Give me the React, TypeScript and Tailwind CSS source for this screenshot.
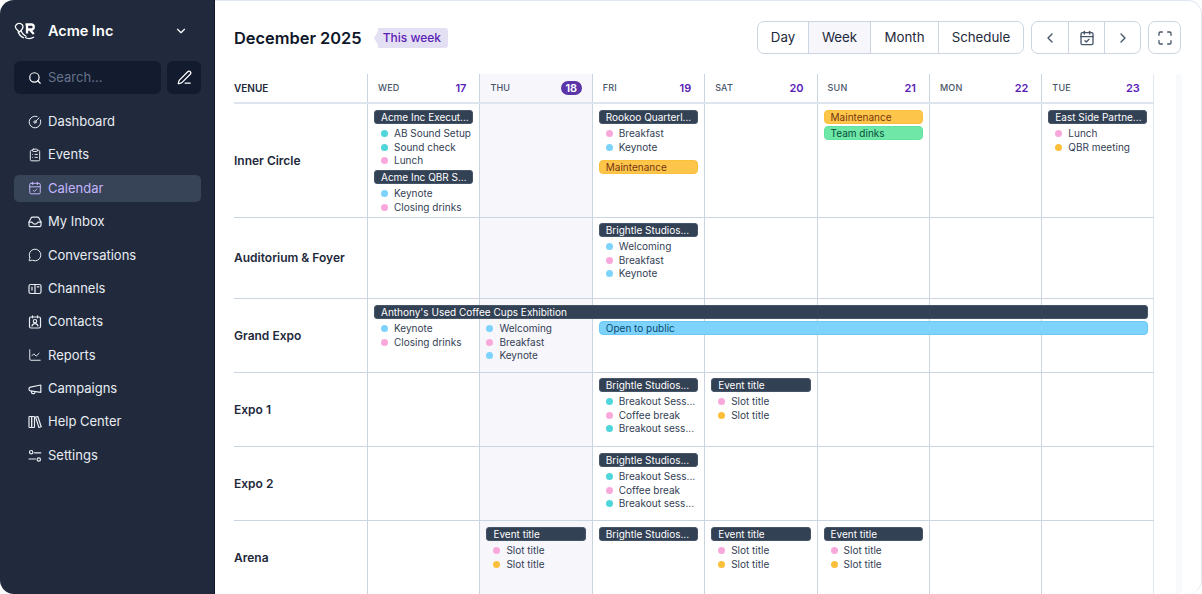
import { CalendarCheck, ChartLine, ChevronDown, ChevronLeft, ChevronRight, CircleGauge, ClipboardList, Maximize, MessageCircle, PenLine, Search } from 'lucide-react';
import type { ReactNode } from 'react';

type Slot = { label: string; color: string };

const teal = 'bg-[#4fd6da]';
const pink = 'bg-[#f9a8dc]';
const blue = 'bg-[#7dd3fc]';
const amber = 'bg-[#fbbf3c]';

const days = [
  { name: 'WED', num: '17' },
  { name: 'THU', num: '18', today: true },
  { name: 'FRI', num: '19' },
  { name: 'SAT', num: '20' },
  { name: 'SUN', num: '21' },
  { name: 'MON', num: '22' },
  { name: 'TUE', num: '23' },
];

const Logo = () => (
  <svg width="22" height="18" viewBox="0 0 22 18" fill="none" stroke="#fff" strokeWidth="1.3">
    <path d="M1.500 4C2.500 1 6.500 .5 8.500 3C9.500 5 8 8 5.500 10C3 8 .8 6 1.500 4Z" />
    <path d="M4 9.500c1 3 3.500 5.500 6 6.500M7 8.500c1 2.500 3 5 5.500 6" />
    <path d="M11.500 2.500h6c3 0 3 5 0 5h-4.500M13 2.500v9M16 8l3.800 4" strokeWidth="2.300" />
    <path d="M11 15.500c3 1.500 6 1.500 9-.5" />
  </svg>
);

const InboxIcon = () => (
  <svg width="14" height="14" viewBox="0 0 14 14" fill="none" stroke="currentColor" strokeWidth="1.200" strokeLinejoin="round" strokeLinecap="round">
    <path d="M1 7l2.200-4.200c.2-.4.500-.6 1-.6h5.600c.5 0 .8.200 1 .6L13 7v3.300c0 .8-.6 1.400-1.400 1.400H2.400c-.8 0-1.400-.6-1.400-1.400V7Z" />
    <path d="M1 7.200h2.500c.5 0 .8.200 1 .6.400.9 1.300 1.300 2.500 1.300s2.100-.4 2.500-1.300c.2-.4.500-.6 1-.6H13" />
  </svg>
);

const ChannelsIcon = () => (
  <svg width="14" height="14" viewBox="0 0 14 14" fill="none" stroke="currentColor" strokeWidth="1.200" strokeLinejoin="round" strokeLinecap="round">
    <rect x="1" y="2.500" width="12" height="9" rx="1.800" />
    <path d="M7 2.500v9M4 5v3M9.300 4.800h1.600" />
  </svg>
);

const ContactsIcon = () => (
  <svg width="14" height="14" viewBox="0 0 14 14" fill="none" stroke="currentColor" strokeWidth="1.200" strokeLinejoin="round" strokeLinecap="round">
    <rect x="1.500" y="2" width="11" height="11" rx="1.500" />
    <path d="M4.500 .8v2M9.500 .8v2" />
    <circle cx="7" cy="6.200" r="1.700" />
    <path d="M4 11c.4-1.500 1.500-2.300 3-2.300s2.600.8 3 2.300" />
  </svg>
);

const MegaphoneIcon = () => (
  <svg width="14" height="14" viewBox="0 0 14 14" fill="none" stroke="currentColor" strokeWidth="1.200" strokeLinejoin="round" strokeLinecap="round">
    <path d="M12.800 3v7.300L2.400 8.800C1.300 8.600 1 8 1 7.200V6.700c0-.8.400-1.300 1.400-1.600L12.800 3Z" />
    <path d="M3.500 9v1.300c0 .8.500 1.300 1.300 1.300h.9c.7 0 1.200-.5 1.200-1.200" />
  </svg>
);

const LibraryIcon = () => (
  <svg width="14" height="14" viewBox="0 0 14 14" fill="none" stroke="currentColor" strokeWidth="1.200" strokeLinejoin="round">
    <rect x="1" y="1.500" width="2.600" height="11" rx=".5" />
    <rect x="3.600" y="1.500" width="2.900" height="11" rx=".5" />
    <path d="M7.600 2.100l2.200-.6 3.400 10.300-2.300.7L7.600 2.100Z" />
  </svg>
);

const SettingsIcon = () => (
  <svg width="14" height="14" viewBox="0 0 14 14" fill="none" stroke="currentColor" strokeWidth="1.200" strokeLinecap="round">
    <circle cx="3.200" cy="3.200" r="1.700" />
    <circle cx="10.800" cy="10.500" r="1.700" />
    <path d="M6.500 3.800h6.300M1 10h6.500" />
  </svg>
);

const nav: { label: string; icon: ReactNode; active?: boolean }[] = [
  { label: 'Dashboard', icon: <CircleGauge size={14} strokeWidth={1.7} /> },
  { label: 'Events', icon: <ClipboardList size={14} strokeWidth={1.7} /> },
  { label: 'Calendar', icon: <CalendarCheck size={14} strokeWidth={1.7} />, active: true },
  { label: 'My Inbox', icon: <InboxIcon /> },
  { label: 'Conversations', icon: <MessageCircle size={14} strokeWidth={1.7} /> },
  { label: 'Channels', icon: <ChannelsIcon /> },
  { label: 'Contacts', icon: <ContactsIcon /> },
  { label: 'Reports', icon: <ChartLine size={14} strokeWidth={1.7} /> },
  { label: 'Campaigns', icon: <MegaphoneIcon /> },
  { label: 'Help Center', icon: <LibraryIcon /> },
  { label: 'Settings', icon: <SettingsIcon /> },
];

const Pill = ({ title }: { title: string }) => (
  <div className="h-[14px] rounded-[3px] border border-[#475569] bg-[#334155] pl-[6px] text-[10px] leading-[12px] whitespace-nowrap text-white">
    {title}
  </div>
);

const Bar = ({ title, className }: { title: string; className: string }) => (
  <div className={`h-[14px] rounded-[4px] border pl-[6px] text-[10px] leading-[12px] ${className}`}>{title}</div>
);

const maintenance = 'border-[#fbbf3c] bg-[#fdc64b] text-[#78350f]';
const dinks = 'border-[#5fe3a1] bg-[#6ee7a7] text-[#064e3b]';
const publicBar = 'border-[#6cc8f5] bg-[#7dd3fc] text-[#0c4a6e]';

const Slots = ({ items }: { items: Slot[] }) => (
  <ul className="mt-[3px] pl-[7px]">
    {items.map((s, i) => (
      <li key={i} className="flex h-[13.4px] items-center gap-[6px] text-[10px] leading-[13px] whitespace-nowrap text-[#334155]">
        <span className={`h-[7px] w-[7px] shrink-0 rounded-full ${s.color}`} />
        <span>{s.label}</span>
      </li>
    ))}
  </ul>
);

const Cell = ({ shaded, last, tight, children }: { shaded?: boolean; last?: boolean; tight?: boolean; children?: ReactNode }) => (
  <div className={`border-l border-[#cbd5e1] px-[6px] ${tight ? 'pt-[5px]' : 'pt-[6px]'} ${shaded ? 'bg-[#f7f6fb]' : ''} ${last ? 'border-r border-r-[#e2e8f0]' : ''}`}>
    {children}
  </div>
);

const Row = ({ name, height, tight, cells }: { name: string; height: string; tight?: boolean; cells: ReactNode[] }) => (
  <div className={`grid grid-cols-[133px_repeat(7,112.400px)] border-b border-[#cbd5e1] ${height}`}>
    <div className="flex items-center text-[12px] font-semibold text-[#1e293b]">{name}</div>
    {cells.map((c, i) => (
      <Cell key={i} shaded={i === 1} last={i === 6} tight={tight}>
        {c}
      </Cell>
    ))}
  </div>
);

const brightle = (items: Slot[]) => (
  <>
    <Pill title="Brightle Studios..." />
    <Slots items={items} />
  </>
);

const eventTitle = (
  <>
    <Pill title="Event title" />
    <Slots items={[{ label: 'Slot title', color: pink }, { label: 'Slot title', color: amber }]} />
  </>
);

const breakout = brightle([
  { label: 'Breakout Sess...', color: teal },
  { label: 'Coffee break', color: pink },
  { label: 'Breakout sess...', color: teal },
]);

export default function App() {
  return (
    <div className="flex h-[594px] w-[1202px] overflow-hidden bg-white font-['Inter',sans-serif]">
      <aside className="h-full w-[215px] shrink-0 rounded-l-[14px] border-r border-[#0f172a] bg-[#202a3c] pt-[20px] pr-[13px] pl-[14px]">
        <div className="flex h-[22px] items-center pr-[13px]">
          <Logo />
          <span className="ml-[12px] flex-1 text-[14.500px] font-semibold text-white">Acme Inc</span>
          <ChevronDown size={14} className="text-white" />
        </div>
        <div className="mt-[19px] flex gap-[6px]">
          <div className="flex h-[33px] flex-1 items-center gap-[6px] rounded-[6px] bg-[#131b2e] pl-[14px] text-[13px] text-[#64748b]">
            <Search size={14} className="text-white" />
            Search...
          </div>
          <div className="flex h-[33px] w-[34px] items-center justify-center rounded-[6px] bg-[#131b2e]">
            <PenLine size={15} className="text-white" />
          </div>
        </div>
        <nav className="mt-[14.500px] flex flex-col gap-[7px]">
          {nav.map((n) => (
            <div
              key={n.label}
              className={`flex h-[26.400px] items-center gap-[6px] rounded-[5px] pl-[14px] text-[13px] ${
                n.active ? 'bg-[#374357] text-[#c4b5fd]' : 'text-[#e8ecf2]'
              }`}>
              {n.icon}
              {n.label}
            </div>
          ))}
        </nav>
      </aside>

      <main className="flex min-w-0 flex-1 flex-col rounded-r-[14px] border-t border-r border-[#e2e8f0] pl-[19px]">
        <header className="flex h-[73px] items-start justify-between pt-[20px] pr-[20px]">
          <div className="flex h-[33px] items-center">
            <h1 className="mt-[1px] text-[16.400px] leading-none font-semibold text-[#0f172a]">December 2025</h1>
            <div className="ml-[12px] flex h-[20px] items-center">
              <span className="h-0 w-0 border-y-[7px] border-r-[4px] border-y-transparent border-r-[#e4e0f3]" />
              <span className="flex h-[20px] items-center rounded-r-[3px] bg-[#e4e0f3] pr-[7px] pl-[5px] text-[12px] font-medium text-[#5b21b6]">
                This week
              </span>
            </div>
          </div>
          <div className="flex gap-[7px] text-[13.300px] text-[#1e293b]">
            <div className="flex h-[33px] overflow-hidden rounded-[7px] border border-[#cbd5e1]">
              <button className="w-[50px] pt-[1px]">Day</button>
              <button className="w-[62px] border-l border-[#cbd5e1] bg-[#f7f6fb] pt-[1px]">Week</button>
              <button className="w-[68px] border-l border-[#cbd5e1] pt-[1px]">Month</button>
              <button className="w-[85px] border-l border-[#cbd5e1] pt-[1px]">Schedule</button>
            </div>
            <div className="flex h-[33px] overflow-hidden rounded-[7px] border border-[#cbd5e1] text-[#475569]">
              <button className="flex w-[36px] items-center justify-center">
                <ChevronLeft size={16} />
              </button>
              <button className="flex w-[36px] items-center justify-center border-l border-[#cbd5e1]">
                <CalendarCheck size={16} />
              </button>
              <button className="flex w-[36px] items-center justify-center border-l border-[#cbd5e1]">
                <ChevronRight size={16} />
              </button>
            </div>
            <button className="flex h-[33px] w-[33px] items-center justify-center rounded-[7px] border border-[#cbd5e1] text-[#475569]">
              <Maximize size={16} />
            </button>
          </div>
        </header>

        <div className="flex min-h-0 flex-1 overflow-hidden">
          <div className="w-[920px] shrink-0">
            <div className="grid h-[30px] grid-cols-[133px_repeat(7,112.400px)] border-b-2 border-[#dfe5ee]">
              <div className="flex items-center text-[10px] font-semibold text-[#1e293b]">VENUE</div>
              {days.map((d, i) => (
                <div
                  key={d.name}
                  className={`flex items-center justify-between border-l border-[#cbd5e1] pl-[10px] ${d.today ? 'bg-[#f7f6fb] pr-[10px]' : 'pr-[13px]'} ${i === 6 ? 'border-r border-r-[#e2e8f0]' : ''}`}>
                  <span className="text-[9px] font-medium tracking-[0.02em] text-[#475569]">{d.name}</span>
                  {d.today ? (
                    <span className="flex h-[14px] w-[21px] items-center justify-center rounded-full bg-[#5b34a8] text-[11px] font-semibold text-white">{d.num}</span>
                  ) : (
                    <span className="text-[11px] font-semibold text-[#5b21b6]">{d.num}</span>
                  )}
                </div>
              ))}
            </div>

            <Row
              name="Inner Circle"
              height="h-[114px]"
              cells={[
                <>
                  <Pill title="Acme Inc Execut..." />
                  <Slots items={[{ label: 'AB Sound Setup', color: teal }, { label: 'Sound check', color: teal }, { label: 'Lunch', color: pink }]} />
                  <div className="mt-[3px]" />
                  <Pill title="Acme Inc QBR S..." />
                  <Slots items={[{ label: 'Keynote', color: blue }, { label: 'Closing drinks', color: pink }]} />
                </>,
                null,
                <>
                  <Pill title="Rookoo Quarterl..." />
                  <Slots items={[{ label: 'Breakfast', color: pink }, { label: 'Keynote', color: blue }]} />
                  <Bar title="Maintenance" className={`mt-[6px] ${maintenance}`} />
                </>,
                null,
                <>
                  <Bar title="Maintenance" className={maintenance} />
                  <Bar title="Team dinks" className={`mt-[2px] ${dinks}`} />
                </>,
                null,
                <>
                  <Pill title="East Side Partne..." />
                  <Slots items={[{ label: 'Lunch', color: pink }, { label: 'QBR meeting', color: amber }]} />
                </>,
              ]}
            />
            <Row
              name="Auditorium & Foyer"
              height="h-[81px]"
              tight
              cells={[
                null,
                null,
                brightle([
                  { label: 'Welcoming', color: blue },
                  { label: 'Breakfast', color: pink },
                  { label: 'Keynote', color: blue },
                ]),
                null,
                null,
                null,
                null,
              ]}
            />

            {/* bars stretch over the day columns, so this row shares one grid */}
            <div className="grid h-[74px] grid-cols-[133px_repeat(7,112.400px)] grid-rows-[22px_14px_1fr] border-b border-[#cbd5e1]">
              <div className="col-start-1 row-span-3 row-start-1 flex items-center text-[12px] font-semibold text-[#1e293b]">Grand Expo</div>
              {days.map((d, i) => (
                <div
                  key={d.name}
                  style={{ gridColumnStart: i + 2 }}
                  className={`row-span-3 row-start-1 border-l border-[#cbd5e1] ${d.today ? 'bg-[#f7f6fb]' : ''} ${i === 6 ? 'border-r border-r-[#e2e8f0]' : ''}`}
                />
              ))}
              <div className="col-start-2 col-end-9 row-start-1 mt-[6px] mr-[6px] ml-[7px] h-[14px]">
                <Pill title="Anthony's Used Coffee Cups Exhibition" />
              </div>
              <div className="col-start-2 row-span-2 row-start-2 -mt-[2px] pl-[7px]">
                <Slots items={[{ label: 'Keynote', color: blue }, { label: 'Closing drinks', color: pink }]} />
              </div>
              <div className="col-start-3 row-span-2 row-start-2 -mt-[2px]">
                <Slots items={[{ label: 'Welcoming', color: blue }, { label: 'Breakfast', color: pink }, { label: 'Keynote', color: blue }]} />
              </div>
              <div className="col-start-4 col-end-9 row-start-2 mr-[6px] ml-[7px]">
                <Bar title="Open to public" className={publicBar} />
              </div>
            </div>

            <Row name="Expo 1" height="h-[74px]" tight cells={[null, null, breakout, eventTitle, null, null, null]} />
            <Row name="Expo 2" height="h-[74px]" cells={[null, null, breakout, null, null, null, null]} />
            <Row
              name="Arena"
              height="h-[74px]"
              cells={[null, eventTitle, <Pill title="Brightle Studios..." />, eventTitle, eventTitle, null, null]}
            />
          </div>
          <div className="ml-[22px] h-full w-[6px] bg-[#f8fafc]" />
        </div>
      </main>
    </div>
  );
}
